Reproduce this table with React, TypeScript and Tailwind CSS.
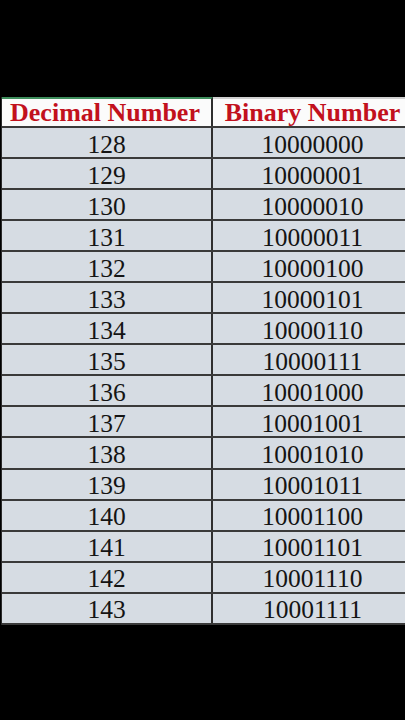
import React from "react";

const rows: [string, string][] = [];
for (let n = 128; n <= 143; n++) {
  rows.push([String(n), n.toString(2)]);
}

export default function App() {
  return (
    <div className="w-[405px] h-[720px] bg-black overflow-hidden pt-[97px]" style={{ fontFamily: '"Liberation Serif", "Times New Roman", serif' }}>
      <div className="w-[412px] ml-[1px] border-l border-[#2a2a2a]">
        <div className="flex h-[31px] bg-[#fbfbfb] border-b-2 border-[#3a3a3a]">
          <div className="w-[211px] pr-[3px] pt-[1px] border-t-2 border-[#3e8e5c] border-r-2 border-r-[#2f2f2f] flex items-center justify-center text-[26px] font-bold text-[#c2111d] leading-none">
            Decimal Number
          </div>
          <div className="w-[199px] pt-[1px] border-t-2 border-[#d0d0d0] flex items-center justify-center text-[26px] font-bold text-[#c2111d] leading-none">
            Binary Number
          </div>
        </div>
        {rows.map(([d, b]) => (
          <div key={d} className="flex h-[31.06px] bg-[#d6dce3] border-b-2 border-[#3a3a3a]">
            <div className="w-[211px] pt-[4px] border-r-2 border-[#2f2f2f] flex items-center justify-center text-[25.5px] text-[#141414] leading-none">
              {d}
            </div>
            <div className="w-[199px] pt-[4px] flex items-center justify-center text-[25.5px] text-[#141414] leading-none">
              {b}
            </div>
          </div>
        ))}
      </div>
    </div>
  );
}
